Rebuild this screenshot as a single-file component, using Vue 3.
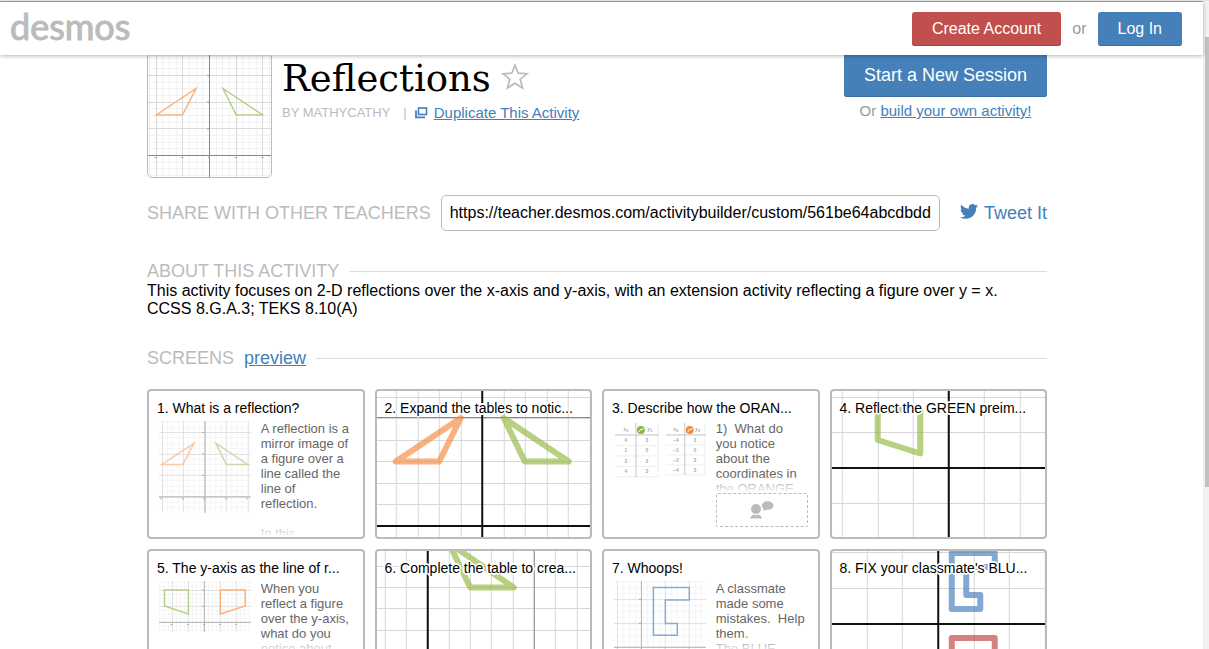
<template>
  <div class="page">
    <div class="view">
      <header class="topbar">
        <a class="logo" href="#">desmos</a>
        <div class="account">
          <button type="button" class="btn btn-red">Create Account</button>
          <span>or</span>
          <button type="button" class="btn btn-blue">Log In</button>
        </div>
      </header>

      <div class="scroll">
        <main class="content">
          <section class="intro">
            <svg class="cover" viewBox="0 0 123 123" preserveAspectRatio="xMidYMid slice">
              <path :d="gridPath(cover, cover.unit / 4)" stroke="#f2f2f2" />
              <path :d="gridPath(cover, cover.unit)" stroke="#dadada" />
              <path :d="axisPath(cover)" stroke="#888" />
              <path :d="tickPath(cover)" stroke="#999" />
              <polygon v-for="s in cover.shapes" :key="s.points" :points="s.points" :stroke="s.color" stroke-width="1.500" />
            </svg>
            <div class="heading">
              <div class="title-row">
                <h1>Reflections</h1>
                <button type="button" class="star" aria-label="Favorite">
                  <svg width="28" height="28" viewBox="0 0 28 28">
                    <path
                      d="M14 2.2 L17.2 10.2 L26 10.700 L19.200 16.200 L21.600 25 L14 20.200 L6.400 25 L8.800 16.200 L2 10.700 L10.800 10.200 Z"
                      fill="none" stroke="#bbb" stroke-width="1.7"
                    />
                  </svg>
                </button>
              </div>
              <div class="byline">
                <span>BY MATHYCATHY</span>
                <span class="bar">|</span>
                <svg width="13" height="12" viewBox="0 0 13 12" fill="none" stroke="#4480b9">
                  <rect x="3.5" y="1" width="8" height="6.5" stroke-width="1.6" />
                  <path d="M1 3.5 V10.3 H10" stroke-width="1.8" />
                </svg>
                <a href="#">Duplicate This Activity</a>
              </div>
            </div>
            <div class="start">
              <button type="button" class="btn btn-blue btn-start">Start a New Session</button>
              <p>Or <a href="#">build your own activity!</a></p>
            </div>
          </section>

          <section class="share">
            <label for="share-url">SHARE WITH OTHER TEACHERS</label>
            <input id="share-url" type="text" readonly :value="shareUrl" />
            <a class="tweet" href="#">
              <svg width="18" height="18" viewBox="0 2 24 24">
                <path
                  fill="#4480b9"
                  d="M23.953 4.57a10 10 0 01-2.825.775 4.958 4.958 0 002.163-2.723c-.951.555-2.005.959-3.127 1.184a4.92 4.92 0 00-8.384 4.482C7.69 8.095 4.067 6.13 1.64 3.162a4.822 4.822 0 00-.666 2.475c0 1.71.87 3.213 2.188 4.096a4.904 4.904 0 01-2.228-.616v.06a4.923 4.923 0 003.946 4.827 4.996 4.996 0 01-2.212.085 4.936 4.936 0 004.604 3.417 9.867 9.867 0 01-6.102 2.105c-.39 0-.779-.023-1.17-.067a13.995 13.995 0 007.557 2.209c9.053 0 13.998-7.496 13.998-13.985 0-.21 0-.42-.015-.63A9.935 9.935 0 0024 4.59z"
                />
              </svg>
              <span>Tweet It</span>
            </a>
          </section>

          <section class="about">
            <h2 class="rule">ABOUT THIS ACTIVITY</h2>
            <p>This activity focuses on 2-D reflections over the x-axis and y-axis, with an extension activity reflecting a figure over y = x.<br />CCSS 8.G.A.3; TEKS 8.10(A)</p>
          </section>

          <section class="screens">
            <h2 class="rule">SCREENS <a href="#">preview</a></h2>
            <div class="cards">
              <article v-for="(card, i) in cards" :key="card.title" class="card">
                <svg v-if="card.full" class="full" viewBox="0 0 214 146" preserveAspectRatio="xMidYMid slice">
                  <path :d="gridPath(card.graph, card.graph.unit)" stroke="#d6d6d6" />
                  <path v-if="card.graph.dark" :d="card.graph.dark" stroke="#888" />
                  <path :d="axisPath(card.graph)" stroke="#111" stroke-width="2" />
                  <polygon
                    v-for="s in card.graph.shapes" :key="s.points" :points="s.points"
                    :stroke="s.color" stroke-width="6" stroke-linejoin="round" stroke-opacity="0.65"
                  />
                </svg>
                <h3>{{ i + 1 }}. {{ card.title }}</h3>
                <div v-if="!card.full" class="body">
                  <svg v-if="card.graph" class="thumb" :viewBox="`0 0 ${card.graph.w} ${card.graph.h}`">
                    <path :d="gridPath(card.graph, card.graph.minor)" stroke="#f6f6f6" />
                    <path :d="gridPath(card.graph, card.graph.unit)" stroke="#e2e2e2" />
                    <path :d="axisPath(card.graph)" stroke="#b4b4b4" />
                    <path :d="tickPath(card.graph)" stroke="#aaa" />
                    <polygon
                      v-for="s in card.graph.shapes" :key="s.points" :points="s.points"
                      :stroke="s.color" stroke-width="1.500" :stroke-opacity="card.graph.fade"
                    />
                  </svg>
                  <svg v-else class="thumb" viewBox="0 0 92 92">
                    <g v-for="t in tables" :key="t.x">
                      <path v-for="n in 4" :key="n" :d="`M${t.x} ${t.top + n * t.step}h${t.w}`" stroke="#eee" />
                      <path :d="`M${t.x + t.w - 1} 2v${t.top + 4 * t.step - 2}`" stroke="#eee" />
                      <path :d="`M${t.x} ${t.top}h${t.w}M${t.mid} 2v${t.top + 4 * t.step - 2}`" stroke="#c4c4c4" />
                      <circle :cx="t.mid + 5" cy="9" r="4" :fill="t.color" />
                      <path :d="`M${t.mid + 3} 11l2-3l1 1l2-2`" stroke="#fff" />
                      <text :x="t.c1" y="10" class="var">x<tspan dy="1" class="sub">{{ t.sub }}</tspan></text>
                      <text :x="t.c2 + 3" y="10" class="var">y<tspan dy="1" class="sub">{{ t.sub }}</tspan></text>
                      <template v-for="(row, r) in t.rows" :key="r">
                        <text :x="t.c1" :y="t.top + 7 + r * t.step">{{ row[0] }}</text>
                        <text :x="t.c2" :y="t.top + 7 + r * t.step">{{ row[1] }}</text>
                      </template>
                    </g>
                  </svg>
                  <div class="note">
                    <p>{{ card.text }}</p>
                    <div v-if="card.answer" class="answer">
                      <svg width="24" height="18" viewBox="0 0 24 18" fill="#bbb">
                        <circle cx="6" cy="8" r="5" />
                        <path d="M0 17.5 C1 14.5 3 13.8 4 13.5 Q6 14.8 8 13.5 C9.500 13.800 11.500 14.500 12 17.500 Z" />
                        <ellipse cx="17.700" cy="4.500" rx="5.800" ry="4.300" />
                        <path d="M13.500 6 L13.300 10 L18 8 Z" />
                      </svg>
                    </div>
                  </div>
                </div>
              </article>
            </div>
          </section>
        </main>
      </div>
    </div>
    <div class="scrollbar"><div class="handle"></div></div>
  </div>
</template>

<script setup>
const shareUrl = 'https://teacher.desmos.com/activitybuilder/custom/561be64abcdbdd';

const ORANGE = '#fab27c';
const GREEN = '#b4d088';
const BLUE = '#86aad6';

// Heavier strokes are drawn translucent, so they start from stronger colors
const ORANGE_BOLD = '#f6893a';
const GREEN_BOLD = '#90b73e';
const BLUE_BOLD = '#4079bb';
const RED_BOLD = '#c03d3d';

const cover = {
  w: 123, h: 123, ox: 61.5, oy: 101.5, unit: 26.7,
  shapes: [
    { color: ORANGE, points: '48,34.500 8.300,61 34.500,61' },
    { color: GREEN, points: '75,34.500 114.700,61 88.300,61' },
  ],
};

const cards = [
  {
    title: 'What is a reflection?',
    text: 'A reflection is a mirror image of a figure over a line called the line of reflection.\n\nIn this',
    graph: {
      w: 92, h: 92, ox: 46, oy: 76, unit: 21.5, minor: 5.375, fade: 0.7,
      shapes: [
        { color: ORANGE, points: '35,22.500 3,43.500 24,43.500' },
        { color: GREEN, points: '57,22.500 89,43.500 67.500,43.500' },
      ],
    },
  },
  {
    title: 'Expand the tables to notic...',
    full: true,
    graph: {
      w: 214, h: 146, ox: 105.5, oy: 135, unit: 21.5, dark: 'M0 26.5H214',
      shapes: [
        { color: ORANGE_BOLD, points: '84,27 19,70.500 62.500,70.500' },
        { color: GREEN_BOLD, points: '127,27 192,70.500 148,70.500' },
      ],
    },
  },
  {
    title: 'Describe how the ORAN...',
    text: '1)  What do you notice about the coordinates in the ORANGE',
    answer: true,
  },
  {
    title: 'Reflect the GREEN preim...',
    full: true,
    graph: {
      w: 214, h: 146, ox: 117, oy: 77, unit: 35.5,
      shapes: [{ color: GREEN_BOLD, points: '46,19 88.500,19 88.500,62.500 46,49' }],
    },
  },
  {
    title: 'The y-axis as the line of r...',
    text: 'When you reflect a figure over the y-axis, what do you notice about',
    answer: true,
    graph: {
      w: 92, h: 51, ox: 45.5, oy: 41.5, unit: 16.2, minor: 4.05, fade: 1,
      shapes: [
        { color: GREEN, points: '5.500,9 29.500,9 29.500,33 5.500,25' },
        { color: ORANGE, points: '61.500,9 86.500,9 86.500,25 61.500,33' },
      ],
    },
  },
  {
    title: 'Complete the table to crea...',
    full: true,
    graph: {
      w: 214, h: 146, ox: 51, oy: 143, unit: 21.3, dark: 'M157.500 0V146',
      shapes: [{ color: GREEN_BOLD, points: '72,-8 137,36.500 93.500,36.500' }],
    },
  },
  {
    title: 'Whoops!',
    text: 'A classmate made some mistakes.  Help them.\nThe BLUE',
    answer: true,
    graph: {
      w: 92, h: 92, ox: 27.5, oy: 66.5, unit: 24, minor: 6, fade: 1,
      shapes: [{ color: BLUE, points: '39.500,6.500 75.500,6.500 75.500,19 51.500,19 51.500,42.500 63.500,42.500 63.500,54.500 39.500,54.500' }],
    },
  },
  {
    title: "FIX your classmate's BLU...",
    full: true,
    graph: {
      w: 214, h: 146, ox: 106.5, oy: 73, unit: 35.6,
      shapes: [
        { color: BLUE_BOLD, points: '120,2 163,2 163,16 134.500,16 134.500,44 148.500,44 148.500,58 120,58' },
        { color: RED_BOLD, points: '120,87 163,87 163,101 134.500,101 134.500,129 148.500,129 148.500,143 120,143' },
      ],
    },
  },
];

const tables = [
  {
    x: 1, w: 44, mid: 22, top: 14, step: 10.5, c1: 12, c2: 33, sub: 1, color: '#8ab54a',
    rows: [['4', '3'], ['1', '5'], ['2', '3'], ['4', '3']],
  },
  {
    x: 52, w: 40, mid: 71, top: 14, step: 10, c1: 62, c2: 81, sub: 2, color: '#f58a3c',
    rows: [['−4', '3'], ['−1', '5'], ['−2', '3'], ['−4', '3']],
  },
];

// Grid lines at every step, counted outwards from the origin
const gridPath = (g, step) => {
  let d = '';
  for (let x = g.ox % step; x < g.w; x += step) {
    d += `M${Math.floor(x) + 0.5} 0V${g.h}`;
  }
  for (let y = g.oy % step; y < g.h; y += step) {
    d += `M0 ${Math.floor(y) + 0.5}H${g.w}`;
  }
  return d;
};

const axisPath = (g) => `M${g.ox} 0V${g.h}M0 ${g.oy}H${g.w}`;

// Tiny marks where the axis numbers sit
const tickPath = (g) => {
  let d = '';
  for (let x = g.ox % g.unit; x < g.w; x += g.unit) {
    d += `M${x - 1.5} ${g.oy + 2}h2`;
  }
  for (let y = g.oy % g.unit; y < g.oy - 1; y += g.unit) {
    d += `M${g.ox - 2.5} ${y}h2`;
  }
  return d;
};
</script>

<style>
body {
  margin: 0;
  background: #fff;
}
</style>

<style scoped>
.page {
  display: flex;
  height: 100vh;
  overflow: hidden;
  font-family: "Liberation Sans", Arial, sans-serif;
  font-size: 16px;
  color: #000;
  box-sizing: border-box;
  border-top: 1px solid #e4e4e4;
}

.view {
  flex: 1;
  min-width: 0;
  display: flex;
  flex-direction: column;
  border-top: 1px solid #a0a0a0;
}

a {
  color: #4480b9;
}

h1,
h2,
h3,
p {
  margin: 0;
  font-weight: normal;
}

.topbar {
  position: relative;
  z-index: 2;
  flex: none;
  height: 53px;
  padding: 0 21px 0 10px;
  display: flex;
  align-items: center;
  justify-content: space-between;
  background: #fff;
  box-shadow: 0 1px 4px rgba(0, 0, 0, 0.3);
}

.logo {
  font-family: Lato, sans-serif;
  font-size: 36px;
  line-height: 44px;
  padding-bottom: 6px;
  color: #bbb;
  -webkit-text-stroke: 1px #bbb;
  text-decoration: none;
}

.account {
  display: flex;
  align-items: center;
  gap: 11px;
  color: #999;
}

.btn {
  height: 34px;
  padding: 0 20px;
  border: 0;
  border-radius: 3px;
  font: inherit;
  color: #fff;
  cursor: pointer;
}

.btn-red {
  background: #c14f4d;
  box-shadow: inset 0 -1px #a94442;
}

.btn-blue {
  background: #4680b9;
  box-shadow: inset 0 -1px #3a6f9f;
}

.scroll {
  flex: 1;
  min-height: 0;
  overflow: hidden;
  padding-right: 9px;
}

.content {
  max-width: 900px;
  margin: -2px auto 0;
}

.intro {
  display: flex;
  align-items: flex-start;
}

.cover {
  flex: none;
  width: 123px;
  height: 123px;
  border: 1px solid #bbb;
  border-radius: 5px;
  fill: none;
}

.heading {
  flex: 1;
  padding: 2px 0 0 10px;
}

.title-row {
  display: flex;
  align-items: center;
  gap: 10px;
}

h1 {
  font-family: "DejaVu Serif", serif;
  font-size: 37px;
  line-height: 48px;
}

.star {
  padding: 0;
  border: 0;
  background: none;
  height: 32px;
  display: flex;
  cursor: pointer;
}

.byline {
  display: flex;
  align-items: center;
  font-size: 13px;
  line-height: 20px;
  color: #bbb;
}

.byline .bar {
  margin: 0 8px 0 13px;
}

.byline a {
  margin-left: 6px;
  font-size: 15px;
}

.start {
  text-align: center;
  font-size: 15px;
  color: #999;
}

.btn-start {
  height: 44px;
  font-size: 18px;
}

.start p {
  margin-top: 4px;
  line-height: 20px;
}

.share {
  display: flex;
  align-items: center;
  margin-top: 17px;
  font-size: 18px;
  color: #bbb;
}

.share input {
  flex: 1;
  min-width: 0;
  height: 36px;
  box-sizing: border-box;
  margin: 0 20px 0 10px;
  padding: 0 8px;
  border: 1px solid #bbb;
  border-radius: 5px;
  font: inherit;
  font-size: 16px;
  color: #000;
}

.tweet {
  display: flex;
  align-items: center;
  gap: 6px;
  text-decoration: none;
}

.about,
.screens {
  margin-top: 30px;
}

.rule {
  display: flex;
  align-items: center;
  gap: 10px;
  font-size: 18px;
  line-height: 20px;
  color: #bbb;
}

.rule::after {
  content: "";
  flex: 1;
  border-top: 1px solid #ddd;
}

.about p {
  margin-top: 1px;
  line-height: 18px;
}

.cards {
  display: grid;
  grid-template-columns: repeat(4, minmax(0, 1fr));
  gap: 10px;
  margin-top: 21px;
}

.card {
  position: relative;
  height: 150px;
  box-sizing: border-box;
  padding: 8px 10px 0;
  border: 2px solid #bbb;
  border-radius: 4px;
  overflow: hidden;
}

/* Graph screens fill the card, with the title over them */
.full {
  position: absolute;
  inset: 0;
  width: 100%;
  height: 100%;
  fill: none;
}

.card h3 {
  position: relative;
  margin: 0 -4px 0 -2px;
  padding-bottom: 4px;
  font-size: 14px;
  line-height: 18px;
  white-space: nowrap;
  text-shadow: 1px 1px #fff, -1px -1px #fff, 1px -1px #fff, -1px 1px #fff,
    2px 0 #fff, -2px 0 #fff, 0 2px #fff, 0 -2px #fff;
}

.body {
  display: grid;
  grid-template-columns: 1fr 1fr;
  gap: 10px;
  align-items: start;
}

.thumb {
  width: 100%;
  fill: none;
}

.thumb text {
  font-size: 5px;
  font-weight: bold;
  text-anchor: middle;
  fill: #aaa;
}

.thumb .var {
  font-style: italic;
}

.thumb .sub {
  font-size: 4px;
}

.note {
  height: 114px;
  display: flex;
  flex-direction: column;
}

.note p {
  position: relative;
  flex: 1;
  min-height: 0;
  overflow: hidden;
  font-size: 13px;
  line-height: 15px;
  color: #666;
  white-space: pre-wrap;
}

.note p::after {
  content: "";
  position: absolute;
  left: 0;
  right: 0;
  bottom: 0;
  height: 14px;
  background: linear-gradient(rgba(255, 255, 255, 0.2), rgba(255, 255, 255, 0.9));
}

.answer {
  flex: none;
  height: 34px;
  box-sizing: border-box;
  margin: 2px 0 8px;
  border: 1px dashed #bbb;
  border-radius: 2px;
  display: flex;
  align-items: center;
  justify-content: center;
}

.scrollbar {
  width: 6px;
  padding: 36px 0 162px 2px;
  box-sizing: border-box;
  background: #f1f1f1;
}

.handle {
  height: 100%;
  background: #c1c1c1;
}
</style>
